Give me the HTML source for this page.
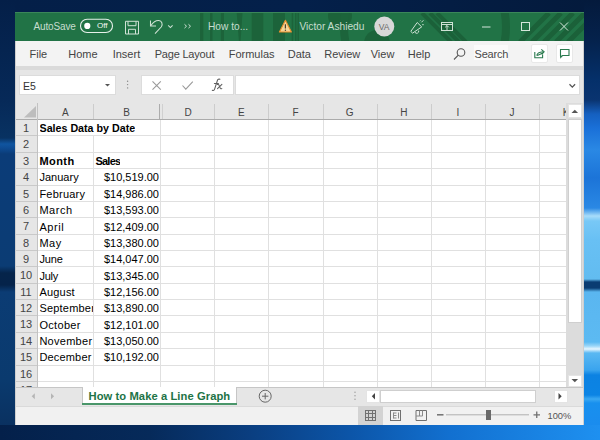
<!DOCTYPE html>
<html><head><meta charset="utf-8">
<style>
*{margin:0;padding:0;box-sizing:border-box}
html,body{width:600px;height:440px;overflow:hidden}
body{position:relative;font-family:"Liberation Sans",sans-serif;background:#0b2446}
.a{position:absolute}
.tt{color:#c6ddce;white-space:nowrap;line-height:1}
.tab{font-size:11px;color:#444;white-space:nowrap;line-height:1}
.box{background:#fff;border:1px solid #dcdcdc}
.ch{font-size:10px;color:#444;text-align:center;line-height:1}
.cell{font-size:11px;color:#000;white-space:nowrap;line-height:1;overflow:hidden}
.rh{font-size:11px;color:#444;text-align:center;line-height:1}
svg{position:absolute;overflow:visible}
</style></head><body>

<div class="a" style="left:0;top:0;width:600px;height:440px;background:linear-gradient(90deg,#041f48 0px,#04204a 300px,#041a3c 600px)"></div>
<div class="a" style="left:0;top:0;width:15px;height:440px;background:linear-gradient(180deg,#041f48 0px,#062958 100px,#083262 138px,#1055a0 144px,#0e4c94 148px,#0b3c78 154px,#0b3c74 266px,#05244a 273px,#05234a 285px,#0b3c74 292px,#0a3a6e 380px,#0a2e5c 440px)"></div>
<div class="a" style="left:584px;top:0;width:16px;height:440px;background:linear-gradient(180deg,#041a3c 0px,#05224c 40px,#05306a 80px,#0a3470 100px,#1560c0 114px,#1a70d8 128px,#2a88e4 150px,#1c74d8 178px,#2a88e4 208px,#a8dcfa 216px,#78c8f6 221px,#68c0f4 240px,#62bcf0 279px,#0a3c72 282px,#0a3c72 288px,#5ab6f0 292px,#5cbaf2 342px,#9ad6f8 346px,#e6f6ff 349px,#5ab8f2 353px,#3aa4ee 370px,#0c82e2 375px,#0c84e4 395px,#3aa8f2 399px,#1890ee 403px,#1a8cee 425px,#1276d8 440px)"></div>
<div class="a" style="left:0;top:425px;width:600px;height:15px;background:linear-gradient(90deg,#04204a 0px,#062a5a 150px,#0a3e80 250px,#0c55a8 350px,#1270d0 450px,#1e90f0 600px)"></div>
<div class="a" style="left:15px;top:12px;width:569px;height:413px;background:#f3f3f3"></div>
<div class="a" style="left:15px;top:12px;width:569px;height:29px;background:#217346;overflow:hidden;border-top:1px solid #3b865a">
<svg width="569" height="29" style="left:0;top:0">
<g fill="#1c633a">
<rect x="185" y="0" width="3.3" height="29"/><rect x="195" y="0" width="2.5" height="29"/><rect x="205.8" y="0" width="3.2" height="29"/>
<path d="M221.7 0h5.8l-2 29h-1.5z"/>
<rect x="236.7" y="0" width="11.6" height="29"/><rect x="258" y="0" width="12" height="29"/>
<rect x="276.7" y="0" width="1.5" height="29"/><rect x="280" y="0" width="1.5" height="29"/><rect x="282.5" y="0" width="1.5" height="29"/>
<circle cx="325" cy="3" r="12"/><circle cx="362" cy="30" r="13"/>
</g>
<g stroke="#1b6139" stroke-width="4">
<line x1="407" y1="0" x2="436" y2="29"/><line x1="415" y1="0" x2="444" y2="29"/><line x1="422" y1="0" x2="451" y2="29"/>
</g>
<g stroke="#1b6139" stroke-width="5">
<line x1="505" y1="29" x2="534" y2="0"/><line x1="517" y1="29" x2="546" y2="0"/><line x1="529" y1="29" x2="558" y2="0"/>
<line x1="541" y1="29" x2="570" y2="0"/><line x1="553" y1="29" x2="582" y2="0"/>
</g>
<circle cx="410" cy="14" r="81" fill="none" stroke="#1c643b" stroke-width="8"/>
</svg>
</div>
<div class="a tt" style="left:33.5px;top:22px;font-size:10px;letter-spacing:-0.15px">AutoSave</div>
<svg width="600" height="440" style="left:0;top:0">
<rect x="80.5" y="19.3" width="32" height="13.2" rx="6.6" fill="none" stroke="#e6f0ea" stroke-width="1.1"/>
<circle cx="87.3" cy="25.9" r="3.1" fill="#fff"/>
</svg>
<div class="a tt" style="left:96.9px;top:22.1px;font-size:8.1px;color:#f4f8f5">Off</div>
<svg width="600" height="440" style="left:0;top:0" fill="none" stroke="#cfe2d5" stroke-width="1">
<path d="M125.5 21.3h13v12.7h-13z"/>
<path d="M128 21.3v4.4h8v-4.4"/>
<path d="M128.5 34v-4.7h7v4.7"/>
</svg>
<svg width="600" height="440" style="left:0;top:0" fill="none" stroke="#cfe2d5" stroke-width="1.05">
<path d="M150.5 20.5v5.5h5.5"/>
<path d="M150.8 25.6c2.5-3.5 5.5-5.2 8-5.0c3 .3 4.2 3.5 2.6 6.2l-6.4 6.8"/>
<path d="M168.2 25.3l2.2 2.2l2.2-2.2"/>
</svg>
<svg width="600" height="440" style="left:0;top:0" fill="none" stroke="#cfe2d5" stroke-width="1"><path d="M184.5 24.3l2 1.9l-2 1.9M188.5 24.3l2 1.9l-2 1.9"/></svg>
<div class="a tt" style="left:208px;top:22px;font-size:10.2px">How to...</div>
<svg width="600" height="440" style="left:0;top:0">
<path d="M285.4 20.3L291.4 32H279.4Z" fill="#f6d596" stroke="#e98d2d" stroke-width="1.1" stroke-linejoin="round"/>
<path d="M285.4 24.2v4.4" stroke="#4a4030" stroke-width="1.2"/>
<circle cx="285.4" cy="30.3" r=".7" fill="#4a4030"/>
</svg>
<div class="a tt" style="left:299.5px;top:22px;font-size:10.2px">Victor Ashiedu</div>
<svg width="600" height="440" style="left:0;top:0">
<circle cx="384.3" cy="26.5" r="10" fill="#d8d8d8"/>
</svg>
<div class="a tt" style="left:376.2px;top:22.6px;font-size:8.5px;color:#6a6a6a;width:16px;text-align:center">VA</div>
<svg width="600" height="440" style="left:0;top:0" fill="none" stroke="#cfe2d5" stroke-width="1" stroke-linejoin="round">
<path d="M410.8 31.4L417.2 22.5L421.7 26.9L412.6 33.1Z"/>
<path d="M415 32.3a2 2 0 0 0 3.6-1.7"/>
<path d="M419.8 21.2l.6-.7M421.4 22.3l2-2M422.2 24.7h1.5"/>
</svg>
<svg width="600" height="440" style="left:0;top:0" fill="none" stroke="#cfe2d5" stroke-width="1">
<rect x="441.5" y="22.5" width="11" height="8"/>
<path d="M441.5 24.5h11M447 30v-4.5M445.2 27.3l1.8-1.8l1.8 1.8"/>
</svg>
<svg width="600" height="440" style="left:0;top:0" fill="none" stroke="#d5e6db" stroke-width="1">
<path d="M482 27h8.5"/>
<rect x="521.5" y="22.5" width="8" height="8"/>
<path d="M560 22.5l8 8M568 22.5l-8 8"/>
</svg>
<div class="a tab" style="left:29.5px;top:49px;">File</div>
<div class="a tab" style="left:68.3px;top:49px;">Home</div>
<div class="a tab" style="left:112.7px;top:49px;">Insert</div>
<div class="a tab" style="left:154.7px;top:49px;letter-spacing:-0.2px;">Page Layout</div>
<div class="a tab" style="left:228.7px;top:49px;">Formulas</div>
<div class="a tab" style="left:287.7px;top:49px;">Data</div>
<div class="a tab" style="left:324.2px;top:49px;">Review</div>
<div class="a tab" style="left:370.7px;top:49px;">View</div>
<div class="a tab" style="left:407.7px;top:49px;">Help</div>
<div class="a" style="left:474px;top:45px;width:34px;height:15px;background:#fafafa"></div>
<div class="a tab" style="left:474.5px;top:49px;color:#4a4a4a;letter-spacing:-0.2px">Search</div>
<svg width="600" height="440" style="left:0;top:0" fill="none" stroke="#555" stroke-width="1.1">
<circle cx="461" cy="52.5" r="3.8"/>
<path d="M458.3 55.2l-4.3 4.3"/>
</svg>
<div class="a" style="left:530.5px;top:43.5px;width:17.5px;height:19.5px;background:#fff;border:1px solid #e8e8e8;border-radius:2px"></div>
<div class="a" style="left:555.5px;top:43.5px;width:17.5px;height:19.5px;background:#fff;border:1px solid #e8e8e8;border-radius:2px"></div>
<svg width="600" height="440" style="left:0;top:0" fill="none" stroke="#2a7a4e" stroke-width="1.1">
<path d="M534.8 52v5.7h7.8v-3.2"/>
<path d="M536.7 55.6c.4-2.4 2.6-3.6 6.3-3.9M537.3 55.5l5.6-2.4" />
<path d="M541.3 49.4l2.8 2.3l-2.4 2.6"/>
<path d="M560.5 49.5h8.5v6h-6.5l-1.8 1.8v-1.8h-.2z"/>
</svg>
<div class="a" style="left:15px;top:66px;width:569px;height:4px;background:#dadada"></div>
<div class="a" style="left:15px;top:70px;width:569px;height:33px;background:#e6e6e6"></div>
<div class="a box" style="left:19px;top:75px;width:96.5px;height:20px"></div>
<div class="a" style="left:23px;top:81px;font-size:10.5px;color:#333;line-height:1">E5</div>
<svg width="600" height="440" style="left:0;top:0">
<path d="M105 84l2.5 2.5l2.5-2.5z" fill="#555"/>
<circle cx="127.6" cy="81.3" r=".7" fill="#888"/><circle cx="127.6" cy="84.6" r=".7" fill="#888"/><circle cx="127.6" cy="87.9" r=".7" fill="#888"/>
</svg>
<div class="a box" style="left:141px;top:75px;width:92.5px;height:20px"></div>
<div class="a box" style="left:235px;top:75px;width:344.5px;height:20px"></div>
<svg width="600" height="440" style="left:0;top:0" fill="none" stroke="#9a9a9a" stroke-width="1.1">
<path d="M152.5 81.3l8.3 8.3M160.8 81.3l-8.3 8.3"/>
<path d="M182.5 85.5l3.3 3.6l7-7.5"/>
<path d="M569.5 84.3l2.8 2.8l2.8-2.8" stroke="#555" stroke-width="1.3"/>
</svg>
<svg width="600" height="440" style="left:0;top:0" fill="none" stroke="#606060" stroke-width="1.05" stroke-linecap="round">
<path d="M212.3 90.3c.9.5 1.9.1 2.3-1.2L217.4 80.5c.4-1.2 1.4-1.7 2.5-1.2"/>
<path d="M214.4 83.4h4"/>
<path d="M217.4 84.5c.9-.4 1.5.2 1.9 1.3l.9 2.3c.3.7.8.9 1.6.5"/>
<path d="M221.9 84.3l-4.4 4.4"/>
</svg>
<div class="a" style="left:37.2px;top:119.1px;width:528.8px;height:267.9px;background:#fff"></div>
<div class="a" style="left:15px;top:103px;width:551.0px;height:16.099999999999994px;background:#e6e6e6"></div>
<div class="a" style="left:15px;top:119.1px;width:22.2px;height:267.9px;background:#e6e6e6"></div>
<svg width="600" height="440" style="left:0;top:0"><path d="M36 106L36 117.5L24 117.5Z" fill="#bdbdbd"/></svg>
<div class="a" style="left:37.2px;top:119.10px;width:528.8px;height:1px;background:#e0e0e0"></div>
<div class="a" style="left:15px;top:119.10px;width:22.2px;height:1px;background:#c9c9c9"></div>
<div class="a" style="left:37.2px;top:135.46px;width:528.8px;height:1px;background:#e0e0e0"></div>
<div class="a" style="left:15px;top:135.46px;width:22.2px;height:1px;background:#c9c9c9"></div>
<div class="a" style="left:37.2px;top:151.82px;width:528.8px;height:1px;background:#e0e0e0"></div>
<div class="a" style="left:15px;top:151.82px;width:22.2px;height:1px;background:#c9c9c9"></div>
<div class="a" style="left:37.2px;top:168.18px;width:528.8px;height:1px;background:#e0e0e0"></div>
<div class="a" style="left:15px;top:168.18px;width:22.2px;height:1px;background:#c9c9c9"></div>
<div class="a" style="left:37.2px;top:184.54px;width:528.8px;height:1px;background:#e0e0e0"></div>
<div class="a" style="left:15px;top:184.54px;width:22.2px;height:1px;background:#c9c9c9"></div>
<div class="a" style="left:37.2px;top:200.90px;width:528.8px;height:1px;background:#e0e0e0"></div>
<div class="a" style="left:15px;top:200.90px;width:22.2px;height:1px;background:#c9c9c9"></div>
<div class="a" style="left:37.2px;top:217.26px;width:528.8px;height:1px;background:#e0e0e0"></div>
<div class="a" style="left:15px;top:217.26px;width:22.2px;height:1px;background:#c9c9c9"></div>
<div class="a" style="left:37.2px;top:233.62px;width:528.8px;height:1px;background:#e0e0e0"></div>
<div class="a" style="left:15px;top:233.62px;width:22.2px;height:1px;background:#c9c9c9"></div>
<div class="a" style="left:37.2px;top:249.98px;width:528.8px;height:1px;background:#e0e0e0"></div>
<div class="a" style="left:15px;top:249.98px;width:22.2px;height:1px;background:#c9c9c9"></div>
<div class="a" style="left:37.2px;top:266.34px;width:528.8px;height:1px;background:#e0e0e0"></div>
<div class="a" style="left:15px;top:266.34px;width:22.2px;height:1px;background:#c9c9c9"></div>
<div class="a" style="left:37.2px;top:282.70px;width:528.8px;height:1px;background:#e0e0e0"></div>
<div class="a" style="left:15px;top:282.70px;width:22.2px;height:1px;background:#c9c9c9"></div>
<div class="a" style="left:37.2px;top:299.06px;width:528.8px;height:1px;background:#e0e0e0"></div>
<div class="a" style="left:15px;top:299.06px;width:22.2px;height:1px;background:#c9c9c9"></div>
<div class="a" style="left:37.2px;top:315.42px;width:528.8px;height:1px;background:#e0e0e0"></div>
<div class="a" style="left:15px;top:315.42px;width:22.2px;height:1px;background:#c9c9c9"></div>
<div class="a" style="left:37.2px;top:331.78px;width:528.8px;height:1px;background:#e0e0e0"></div>
<div class="a" style="left:15px;top:331.78px;width:22.2px;height:1px;background:#c9c9c9"></div>
<div class="a" style="left:37.2px;top:348.14px;width:528.8px;height:1px;background:#e0e0e0"></div>
<div class="a" style="left:15px;top:348.14px;width:22.2px;height:1px;background:#c9c9c9"></div>
<div class="a" style="left:37.2px;top:364.50px;width:528.8px;height:1px;background:#e0e0e0"></div>
<div class="a" style="left:15px;top:364.50px;width:22.2px;height:1px;background:#c9c9c9"></div>
<div class="a" style="left:37.2px;top:380.86px;width:528.8px;height:1px;background:#e0e0e0"></div>
<div class="a" style="left:15px;top:380.86px;width:22.2px;height:1px;background:#c9c9c9"></div>
<div class="a" style="left:93.30px;top:119.1px;width:1px;height:267.9px;background:#e0e0e0"></div>
<div class="a" style="left:93.30px;top:104px;width:1px;height:15.099999999999994px;background:#cccccc"></div>
<div class="a" style="left:159.80px;top:119.1px;width:1px;height:267.9px;background:#e0e0e0"></div>
<div class="a" style="left:214.30px;top:119.1px;width:1px;height:267.9px;background:#e0e0e0"></div>
<div class="a" style="left:214.30px;top:104px;width:1px;height:15.099999999999994px;background:#cccccc"></div>
<div class="a" style="left:268.40px;top:119.1px;width:1px;height:267.9px;background:#e0e0e0"></div>
<div class="a" style="left:268.40px;top:104px;width:1px;height:15.099999999999994px;background:#cccccc"></div>
<div class="a" style="left:322.60px;top:119.1px;width:1px;height:267.9px;background:#e0e0e0"></div>
<div class="a" style="left:322.60px;top:104px;width:1px;height:15.099999999999994px;background:#cccccc"></div>
<div class="a" style="left:376.70px;top:119.1px;width:1px;height:267.9px;background:#e0e0e0"></div>
<div class="a" style="left:376.70px;top:104px;width:1px;height:15.099999999999994px;background:#cccccc"></div>
<div class="a" style="left:430.80px;top:119.1px;width:1px;height:267.9px;background:#e0e0e0"></div>
<div class="a" style="left:430.80px;top:104px;width:1px;height:15.099999999999994px;background:#cccccc"></div>
<div class="a" style="left:484.95px;top:119.1px;width:1px;height:267.9px;background:#e0e0e0"></div>
<div class="a" style="left:484.95px;top:104px;width:1px;height:15.099999999999994px;background:#cccccc"></div>
<div class="a" style="left:539.10px;top:119.1px;width:1px;height:267.9px;background:#e0e0e0"></div>
<div class="a" style="left:539.10px;top:104px;width:1px;height:15.099999999999994px;background:#cccccc"></div>
<div class="a" style="left:93.3px;top:120.10px;width:1px;height:15.36px;background:#fff"></div>
<div class="a" style="left:159.3px;top:104px;width:1px;height:15.099999999999994px;background:#acacac"></div>
<div class="a" style="left:162.2px;top:104px;width:1px;height:15.099999999999994px;background:#d0d0d0"></div>
<div class="a" style="left:15px;top:119px;width:551.0px;height:1px;background:#ababab"></div>
<div class="a" style="left:37px;top:103px;width:1px;height:284.0px;background:#c2c2c2"></div>
<div class="a ch" style="left:55.25px;top:108.3px;width:20px">A</div>
<div class="a ch" style="left:116.55px;top:108.3px;width:20px">B</div>
<div class="a ch" style="left:178.15px;top:108.3px;width:20px">D</div>
<div class="a ch" style="left:231.35px;top:108.3px;width:20px">E</div>
<div class="a ch" style="left:285.50px;top:108.3px;width:20px">F</div>
<div class="a ch" style="left:339.65px;top:108.3px;width:20px">G</div>
<div class="a ch" style="left:393.75px;top:108.3px;width:20px">H</div>
<div class="a ch" style="left:447.88px;top:108.3px;width:20px">I</div>
<div class="a ch" style="left:502.02px;top:108.3px;width:20px">J</div>
<div class="a ch" style="left:556.15px;top:108.3px;width:20px">K</div>
<div class="a rh" style="left:15px;top:123.10px;width:22px">1</div>
<div class="a rh" style="left:15px;top:139.46px;width:22px">2</div>
<div class="a rh" style="left:15px;top:155.82px;width:22px">3</div>
<div class="a rh" style="left:15px;top:172.18px;width:22px">4</div>
<div class="a rh" style="left:15px;top:188.54px;width:22px">5</div>
<div class="a rh" style="left:15px;top:204.90px;width:22px">6</div>
<div class="a rh" style="left:15px;top:221.26px;width:22px">7</div>
<div class="a rh" style="left:15px;top:237.62px;width:22px">8</div>
<div class="a rh" style="left:15px;top:253.98px;width:22px">9</div>
<div class="a rh" style="left:15px;top:270.34px;width:22px">10</div>
<div class="a rh" style="left:15px;top:286.70px;width:22px">11</div>
<div class="a rh" style="left:15px;top:303.06px;width:22px">12</div>
<div class="a rh" style="left:15px;top:319.42px;width:22px">13</div>
<div class="a rh" style="left:15px;top:335.78px;width:22px">14</div>
<div class="a rh" style="left:15px;top:352.14px;width:22px">15</div>
<div class="a rh" style="left:15px;top:368.50px;width:22px">16</div>
<div class="a rh" style="left:15px;top:384.86px;width:22px">17</div>
<div class="a cell" style="left:39.5px;top:123.40px;font-weight:bold;font-size:10.7px">Sales Data by Date</div>
<div class="a cell" style="left:39.4px;top:156.12px;width:53.8px;font-weight:bold;letter-spacing:0.435px;">Month</div>
<div class="a cell" style="left:95.4px;top:156.12px;font-weight:bold;letter-spacing:-0.757px;">Sales</div>
<div class="a cell" style="left:39.4px;top:172.48px;width:53.8px;letter-spacing:0.028px;">January</div>
<div class="a cell" style="left:94px;top:172.48px;width:65px;text-align:right">$10,519.00</div>
<div class="a cell" style="left:39.4px;top:188.84px;width:53.8px;letter-spacing:0.226px;">February</div>
<div class="a cell" style="left:94px;top:188.84px;width:65px;text-align:right">$14,986.00</div>
<div class="a cell" style="left:39.4px;top:205.20px;width:53.8px;letter-spacing:0.515px;">March</div>
<div class="a cell" style="left:94px;top:205.20px;width:65px;text-align:right">$13,593.00</div>
<div class="a cell" style="left:39.4px;top:221.56px;width:53.8px;letter-spacing:0.585px;">April</div>
<div class="a cell" style="left:94px;top:221.56px;width:65px;text-align:right">$12,409.00</div>
<div class="a cell" style="left:39.4px;top:237.92px;width:53.8px;letter-spacing:0.510px;">May</div>
<div class="a cell" style="left:94px;top:237.92px;width:65px;text-align:right">$13,380.00</div>
<div class="a cell" style="left:39.4px;top:254.28px;width:53.8px;letter-spacing:-0.113px;">June</div>
<div class="a cell" style="left:94px;top:254.28px;width:65px;text-align:right">$14,047.00</div>
<div class="a cell" style="left:39.4px;top:270.64px;width:53.8px;letter-spacing:-0.253px;">July</div>
<div class="a cell" style="left:94px;top:270.64px;width:65px;text-align:right">$13,345.00</div>
<div class="a cell" style="left:39.4px;top:287.00px;width:53.8px;letter-spacing:0.202px;">August</div>
<div class="a cell" style="left:94px;top:287.00px;width:65px;text-align:right">$12,156.00</div>
<div class="a cell" style="left:39.4px;top:303.36px;width:53.8px;letter-spacing:0.207px;">September</div>
<div class="a cell" style="left:94px;top:303.36px;width:65px;text-align:right">$13,890.00</div>
<div class="a cell" style="left:39.4px;top:319.72px;width:53.8px;letter-spacing:0.322px;">October</div>
<div class="a cell" style="left:94px;top:319.72px;width:65px;text-align:right">$12,101.00</div>
<div class="a cell" style="left:39.4px;top:336.08px;width:53.8px;letter-spacing:0.274px;">November</div>
<div class="a cell" style="left:94px;top:336.08px;width:65px;text-align:right">$13,050.00</div>
<div class="a cell" style="left:39.4px;top:352.44px;width:53.8px;letter-spacing:0.174px;">December</div>
<div class="a cell" style="left:94px;top:352.44px;width:65px;text-align:right">$10,192.00</div>
<div class="a" style="left:566px;top:103px;width:17px;height:284.0px;background:#dcdcdc"></div>
<div class="a" style="left:568px;top:104px;width:13.5px;height:14px;background:#fff;border:1px solid #e4e4e4"></div>
<div class="a" style="left:568px;top:119px;width:13.5px;height:203.5px;background:#fff;border:1px solid #cfcfcf"></div>
<div class="a" style="left:568px;top:374.5px;width:13.5px;height:12.5px;background:#fff;border:1px solid #e4e4e4"></div>
<svg width="600" height="440" style="left:0;top:0">
<path d="M571.5 113l3.3-3.3l3.3 3.3z" fill="#555"/>
<path d="M571.5 379l3.3 3.3l3.3-3.3z" fill="#555"/>
</svg>
<div class="a" style="left:15px;top:387px;width:569px;height:19px;background:#e6e6e6;border-top:1px solid #c6c6c6"></div>
<div class="a" style="left:82px;top:387px;width:155px;height:18px;background:#fff;border-left:1px solid #c6c6c6;border-right:1px solid #c6c6c6"></div>
<div class="a" style="left:82px;top:403px;width:155px;height:2px;background:#4a966a"></div>
<div class="a" style="left:88.5px;top:390.5px;font-size:11.2px;font-weight:bold;color:#217346;line-height:1;white-space:nowrap;letter-spacing:0.08px">How to Make a Line Graph</div>
<svg width="600" height="440" style="left:0;top:0">
<path d="M34.8 393.3v6l-3.1-3z" fill="#b5b5b5"/>
<path d="M51 393.3v6l3.1-3z" fill="#b5b5b5"/>
<circle cx="265.2" cy="396.2" r="6" fill="none" stroke="#666" stroke-width="1"/>
<path d="M262 396.2h6.4M265.2 393v6.4" stroke="#666" stroke-width="1"/>
<circle cx="355" cy="392.3" r=".7" fill="#999"/><circle cx="355" cy="395.8" r=".7" fill="#999"/><circle cx="355" cy="399.3" r=".7" fill="#999"/>
</svg>
<div class="a" style="left:366px;top:389.5px;width:13.5px;height:13.5px;background:#fff;border:1px solid #e4e4e4"></div>
<div class="a" style="left:380px;top:389.5px;width:156px;height:13.5px;background:#fff;border:1px solid #cfcfcf"></div>
<div class="a" style="left:553.5px;top:389.5px;width:14px;height:13.5px;background:#fff;border:1px solid #e4e4e4"></div>
<svg width="600" height="440" style="left:0;top:0">
<path d="M375 393l-3.2 3.2l3.2 3.2z" fill="#444"/>
<path d="M558.5 393l3.2 3.2l-3.2 3.2z" fill="#444"/>
</svg>
<div class="a" style="left:15px;top:406px;width:569px;height:19px;background:#f1f1f1;border-top:1px solid #dadada"></div>
<div class="a" style="left:358.3px;top:406px;width:24.5px;height:18.5px;background:#d3d3d3"></div>
<svg width="600" height="440" style="left:0;top:0" fill="none" stroke="#707070" stroke-width="1">
<rect x="365.5" y="410.5" width="10" height="10"/>
<path d="M368.5 410.5v10M372.5 410.5v10M365.5 413.5h10M365.5 417.5h10"/>
<rect x="390.5" y="410.5" width="10" height="10"/>
<path d="M393.5 412.5v6M393.5 413h3M393.5 415.5h3M393.5 418h3M398.5 412.5v6" stroke="#8a8a8a"/>
<path d="M416 410.5h10.5v10h-10.5z"/>
<path d="M419.5 410.5v5.5h3v-5.5M416 416h3.5" stroke="#8a8a8a"/>
<path d="M437 414.8h6.5" stroke-width="1.5"/>
<path d="M446 414.8h40M491 414.8h38" stroke="#b0b0b0"/>
<path d="M533.5 414.8h6.5M536.75 411.5v6.6" stroke-width="1.3"/>
</svg>
<div class="a" style="left:486px;top:410.3px;width:4.8px;height:9.7px;background:#6a6a6a"></div>
<div class="a" style="left:547.5px;top:411.5px;font-size:9.3px;color:#555;line-height:1">100%</div>
<div class="a" style="left:15px;top:41px;width:1px;height:384px;background:#cfcfcf"></div>
<div class="a" style="left:583px;top:41px;width:1px;height:384px;background:#cfcfcf"></div>
</body></html>
